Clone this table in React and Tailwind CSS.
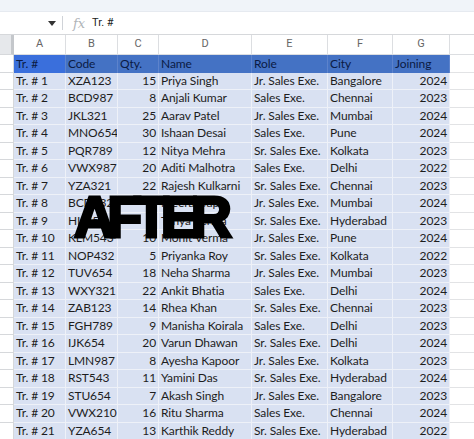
import React from "react";

const rows = [
  ["Tr. # 1", "XZA123", "15", "Priya Singh", "Jr. Sales Exe.", "Bangalore", "2024"],
  ["Tr. # 2", "BCD987", "8", "Anjali Kumar", "Sales Exe.", "Chennai", "2023"],
  ["Tr. # 3", "JKL321", "25", "Aarav Patel", "Jr. Sales Exe.", "Mumbai", "2024"],
  ["Tr. # 4", "MNO654", "30", "Ishaan Desai", "Sales Exe.", "Pune", "2024"],
  ["Tr. # 5", "PQR789", "12", "Nitya Mehra", "Sr. Sales Exe.", "Kolkata", "2023"],
  ["Tr. # 6", "VWX987", "20", "Aditi Malhotra", "Sales Exe.", "Delhi", "2022"],
  ["Tr. # 7", "YZA321", "22", "Rajesh Kulkarni", "Sr. Sales Exe.", "Chennai", "2023"],
  ["Tr. # 8", "BCD432", "9", "Meera Gupta", "Jr. Sales Exe.", "Mumbai", "2024"],
  ["Tr. # 9", "HIJ456", "5", "Tanya Verma", "Sr. Sales Exe.", "Hyderabad", "2023"],
  ["Tr. # 10", "KLM543", "10", "Mohit Verma", "Jr. Sales Exe.", "Pune", "2024"],
  ["Tr. # 11", "NOP432", "5", "Priyanka Roy", "Sr. Sales Exe.", "Kolkata", "2022"],
  ["Tr. # 12", "TUV654", "18", "Neha Sharma", "Jr. Sales Exe.", "Mumbai", "2023"],
  ["Tr. # 13", "WXY321", "22", "Ankit Bhatia", "Sales Exe.", "Delhi", "2024"],
  ["Tr. # 14", "ZAB123", "14", "Rhea Khan", "Sr. Sales Exe.", "Chennai", "2023"],
  ["Tr. # 15", "FGH789", "9", "Manisha Koirala", "Sales Exe.", "Delhi", "2023"],
  ["Tr. # 16", "IJK654", "20", "Varun Dhawan", "Sr. Sales Exe.", "Delhi", "2024"],
  ["Tr. # 17", "LMN987", "8", "Ayesha Kapoor", "Jr. Sales Exe.", "Kolkata", "2023"],
  ["Tr. # 18", "RST543", "11", "Yamini Das", "Sr. Sales Exe.", "Hyderabad", "2024"],
  ["Tr. # 19", "STU654", "7", "Akash Singh", "Jr. Sales Exe.", "Bangalore", "2023"],
  ["Tr. # 20", "VWX210", "16", "Ritu Sharma", "Sales Exe.", "Chennai", "2024"],
  ["Tr. # 21", "YZA654", "13", "Karthik Reddy", "Sr. Sales Exe.", "Hyderabad", "2022"],
];

const headers = ["Tr. #", "Code", "Qty.", "Name", "Role", "City", "Joining"];
const letters = ["A", "B", "C", "D", "E", "F", "G"];
const right = [false, false, true, false, false, false, true];

const gridCols = "grid grid-cols-[14px_52px_52px_41px_93px_76px_65px_57px_1fr]";

export default function App() {
  return (
    <div className="relative w-[474px] h-[439px] overflow-hidden bg-white font-['Lato','Liberation_Sans',sans-serif]">
      <div className="h-[12px] bg-[#f0f4f9] border-b border-[#e6eaf0]" />
      <div className="h-[22px] flex items-center bg-white">
        <div className="w-[60px] flex justify-end pr-[4px]">
          <svg width="8" height="5" viewBox="0 0 8 5"><path d="M0 0h8L4 5z" fill="#333" /></svg>
        </div>
        <div className="w-px h-[14px] bg-[#d0d3d8] ml-[2px]" />
        <span className="ml-[10px] w-[18px] text-[13px] italic text-[#b0b4b8] font-['DejaVu_Serif',serif] leading-none">fx</span>
        <span className="ml-[1px] text-[11px] text-[#222] font-['Roboto',sans-serif]">Tr. #</span>
      </div>
      <div className={`${gridCols} h-[21px] border-t border-[#d6d8db] text-[11px] text-[#666] font-['Roboto',sans-serif]`}>
        <div className="bg-[#e6e8eb] border-r-[3px] border-[#c4c7cb] border-b border-b-[#d6d8db]" />
        {letters.map((l) => (
          <div key={l} className="flex items-center justify-center border-r border-b border-[#dcdee1]">{l}</div>
        ))}
        <div className="border-b border-[#dcdee1]" />
      </div>
      <div className={`${gridCols} h-[17.5px] text-[12px] tracking-[-0.1px] text-[#0b1b44]`}>
        <div className="border-r border-b border-[#d6d8db]" />
        {headers.map((h, i) => (
          <div
            key={h}
            className={`flex items-center px-[2px] border-r border-[#5d83cc] ${i === 0 ? "bg-[#3a6fdc]" : "bg-[#4472c4]"}`}
          >
            {h}
          </div>
        ))}
        <div className="border-b border-[#e2e3e5]" />
      </div>
      {rows.map((r, ri) => (
        <div key={ri} className={`${gridCols} h-[17.5px] text-[12px] tracking-[-0.1px] text-[#1d1d1d]`}>
          <div className="border-r border-b border-[#d6d8db]" />
          {r.map((c, ci) => (
            <div
              key={ci}
              className={`flex items-center px-[2px] whitespace-nowrap overflow-hidden bg-[#d9e1f2] border-r border-b border-[#eef1f8] ${right[ci] ? "justify-end" : ""}`}
            >
              {c}
            </div>
          ))}
          <div className="border-b border-[#e2e3e5]" />
        </div>
      ))}
      <div className="absolute left-[74px] top-[189px] text-[57px] font-bold leading-none tracking-[-8px] text-black font-['Liberation_Sans',sans-serif] [-webkit-text-stroke:3px_black]">
        AFTER
      </div>
    </div>
  );
}
